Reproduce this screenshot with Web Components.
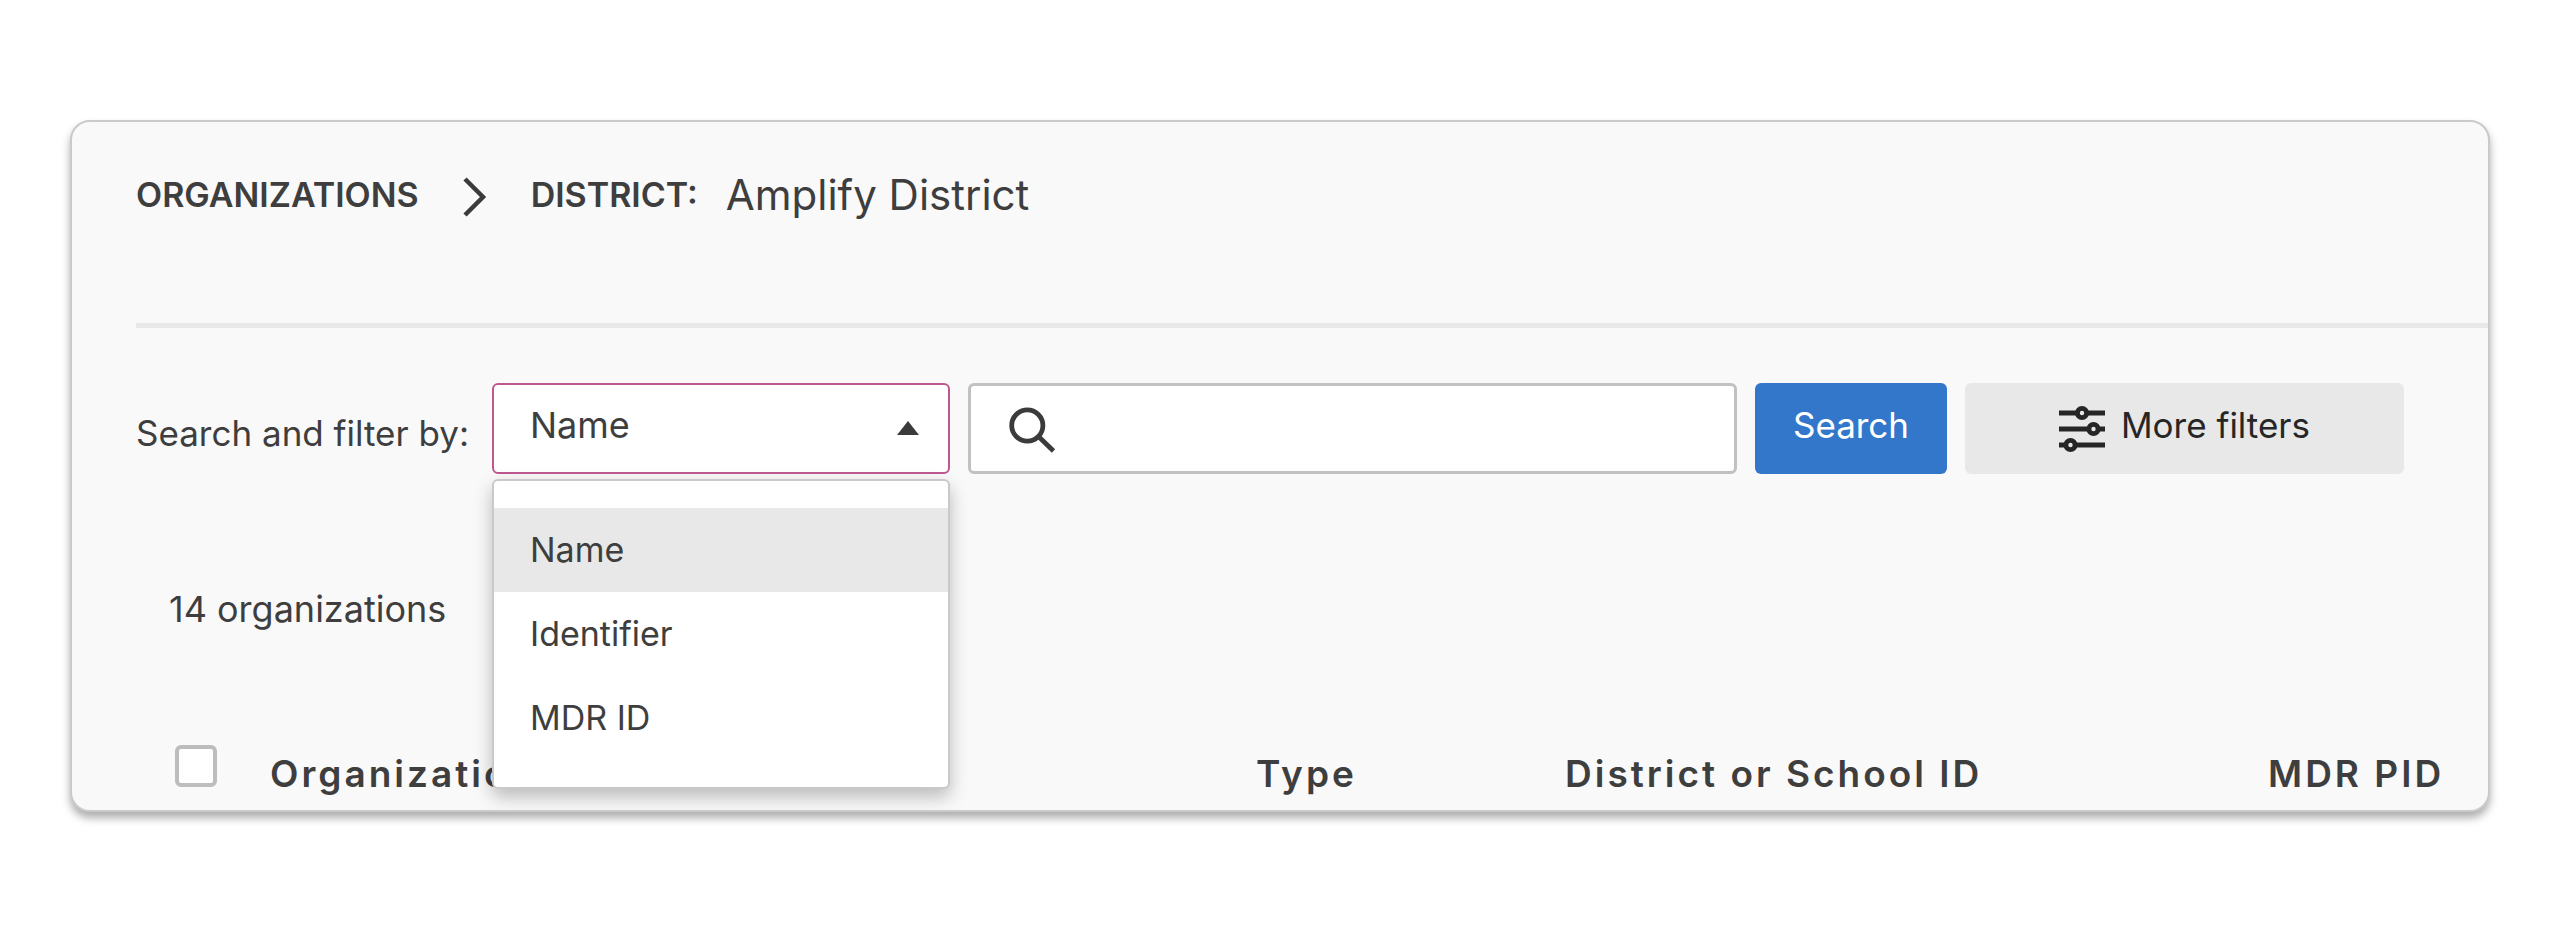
<!DOCTYPE html>
<html lang="en">
<head>
<meta charset="utf-8">
<title>Organizations</title>
<style>
  body { margin: 0; background: #fff; color: #3e3e3e; font-family: Inter, "Liberation Sans", sans-serif; }
</style>
</head>
<body>
<org-panel>
  <org-breadcrumb slot="header" parent="ORGANIZATIONS" kind="DISTRICT:">Amplify District</org-breadcrumb>
  <org-toolbar>
    <filter-select></filter-select>
    <search-field></search-field>
    <action-button variant="primary">Search</action-button>
    <action-button variant="quiet" icon>More filters</action-button>
  </org-toolbar>
  <result-count>14 organizations</result-count>
  <org-table></org-table>
</org-panel>

<script>
const define = (name, html, setup) => {
  const template = document.createElement('template');
  template.innerHTML = html;
  customElements.define(name, class extends HTMLElement {
    connectedCallback() {
      if (this.shadowRoot) return;
      const root = this.attachShadow({ mode: 'open' });
      root.append(template.content.cloneNode(true));
      if (setup) setup(this, root);
    }
  });
};

define('org-panel', `
  <style>
    :host { display: block; padding: 120px 70px; }
    main { border: 2px solid #cacaca; border-radius: 20px; background: #f9f9f9; overflow: hidden;
           box-shadow: 0 6px 8px rgba(0, 0, 0, .32); padding: 0 0 12px 64px; }
    header { padding: 49px 0 104px; border-bottom: 5px solid #e8e8e8; }
  </style>
  <main>
    <header><slot name="header"></slot></header>
    <slot></slot>
  </main>`);

define('org-breadcrumb', `
  <style>
    :host { display: block; }
    nav { display: flex; align-items: center; line-height: 48px; font-size: 34px; font-weight: 600; }
    a { color: inherit; text-decoration: none; }
    svg { width: 24px; height: 40px; margin: 4px 44px 0; }
    .current { margin-left: 28px; font-size: 42px; font-weight: 400; }
  </style>
  <nav aria-label="Breadcrumb">
    <a href="#organizations" class="parent"></a>
    <svg viewBox="0 0 24 40" fill="none" stroke="#3b3b3b" stroke-width="4.5" aria-hidden="true"><path d="M2 2 20 20 2 38"/></svg>
    <span class="kind"></span>
    <span class="current"><slot></slot></span>
  </nav>`, (host, root) => {
  root.querySelector('.parent').textContent = host.getAttribute('parent');
  root.querySelector('.kind').textContent = host.getAttribute('kind');
});

define('org-toolbar', `
  <style>
    :host { display: flex; gap: 18px; margin: 55px 84px 111px 0; }
    ::slotted(*) { flex: none; }
    ::slotted(search-field) { flex: 1; }
  </style>
  <slot></slot>`);

define('filter-select', `
  <style>
    :host { display: flex; gap: 18px; font-size: 36px; }
    label { width: 338px; font-size: 35px; line-height: 48px; padding-top: 26px; white-space: nowrap; }
    .box { position: relative; width: 458px; }
    select { display: block; box-sizing: border-box; width: 100%; height: 91px; margin: 0; padding: 0 36px 8px;
             appearance: none; border: 2px solid #c0588f; border-radius: 6px; background: #fff;
             color: inherit; font: inherit; outline: none; }
    svg { position: absolute; right: 30px; top: 38px; width: 24px; height: 15px; pointer-events: none; }
    ul { position: absolute; z-index: 2; top: 96px; left: 0; right: 0; margin: 0; padding: 27px 0; list-style: none;
         border: 2px solid #c9c9c9; border-radius: 6px; background: #fff; font-size: 34px; line-height: 84px;
         box-shadow: 0 8px 18px rgba(0, 0, 0, .25); }
    li { padding: 0 36px; }
    li[aria-selected="true"] { background: #e8e8e8; }
  </style>
  <label for="field">Search and filter by:</label>
  <div class="box">
    <select id="field"><option>Name</option><option>Identifier</option><option>MDR ID</option></select>
    <svg viewBox="0 0 24 15" aria-hidden="true"><path d="M12 0 23 14H1z" fill="#3b3b3b"/></svg>
    <ul role="listbox" aria-label="Search and filter by">
      <li role="option" aria-selected="true">Name</li>
      <li role="option" aria-selected="false">Identifier</li>
      <li role="option" aria-selected="false">MDR ID</li>
    </ul>
  </div>`, (host, root) => {
  const select = root.querySelector('select');
  const items = [...root.querySelectorAll('li')];
  items.forEach(item => item.addEventListener('click', () => {
    select.value = item.textContent;
    items.forEach(other => other.setAttribute('aria-selected', other === item));
  }));
});

define('search-field', `
  <style>
    :host { display: block; }
    div { display: flex; align-items: center; box-sizing: border-box; height: 91px; padding: 0 38px;
          border: 3px solid #c1c1c1; border-radius: 6px; background: #fff; }
    svg { flex: none; width: 48px; height: 48px; }
    input { flex: 1; min-width: 0; margin-left: 16px; padding: 0 0 6px; border: 0; outline: none; background: none;
            color: inherit; font: inherit; font-size: 36px; }
  </style>
  <div>
    <svg viewBox="0 0 48 48" fill="none" stroke="#3b3b3b" stroke-width="4.8" aria-hidden="true"><circle cx="18.3" cy="20.5" r="15.6"/><path d="m30 32 14.500 14"/></svg>
    <input type="text" aria-label="Search text">
  </div>`);

define('action-button', `
  <style>
    :host { display: block; }
    button { display: flex; align-items: center; justify-content: center; gap: 16px; width: 192px; height: 91px;
             margin: 0; padding: 0; border: 0; border-radius: 6px; background: #3377ca; color: #fff;
             font: inherit; font-size: 35px; line-height: 48px; }
    span { padding-bottom: 8px; white-space: nowrap; }
    svg { display: none; width: 46px; height: 46px; }
    :host([variant="quiet"]) button { width: 439px; background: #e8e8e8; color: #262626; }
    :host([icon]) svg { display: block; }
  </style>
  <button type="button">
    <svg viewBox="0 0 46 46" fill="none" stroke="currentColor" stroke-width="4.8" aria-hidden="true">
      <path d="M0 7h18M28 7h18M0 23h29M39 23h7M0 39h7M16 39h30"/>
      <circle cx="23" cy="7" r="4.6"/><circle cx="34.500" cy="23" r="4.6"/><circle cx="11.500" cy="39" r="4.6"/>
    </svg>
    <span><slot></slot></span>
  </button>`);

define('result-count', `
  <style>:host { display: block; padding-left: 33px; margin-bottom: 109px; font-size: 36px; line-height: 48px; }</style>
  <slot></slot>`);

define('org-table', `
  <style>
    :host { display: block; }
    table { width: 100%; table-layout: fixed; border-collapse: collapse; }
    th { padding: 8px 0 0; text-align: left; vertical-align: top; white-space: nowrap;
         font-size: 37px; line-height: 48px; font-weight: 600; letter-spacing: 3px; }
    th.check { width: 134px; padding-top: 3px; }
    th.type { width: 309px; }
    th.id { width: 703px; }
    th.pid { width: 220px; }
    input { display: block; box-sizing: border-box; width: 42px; height: 42px; margin: 0 0 0 39px; appearance: none;
            border: 4px solid #bdbdbd; border-radius: 6px; background: #fff; }
  </style>
  <table>
    <thead><tr>
      <th class="check"><input type="checkbox" aria-label="Select all organizations"></th>
      <th>Organization</th><th class="type">Type</th><th class="id">District or School ID</th><th class="pid">MDR PID</th>
    </tr></thead>
  </table>`);
</script>
</body>
</html>
